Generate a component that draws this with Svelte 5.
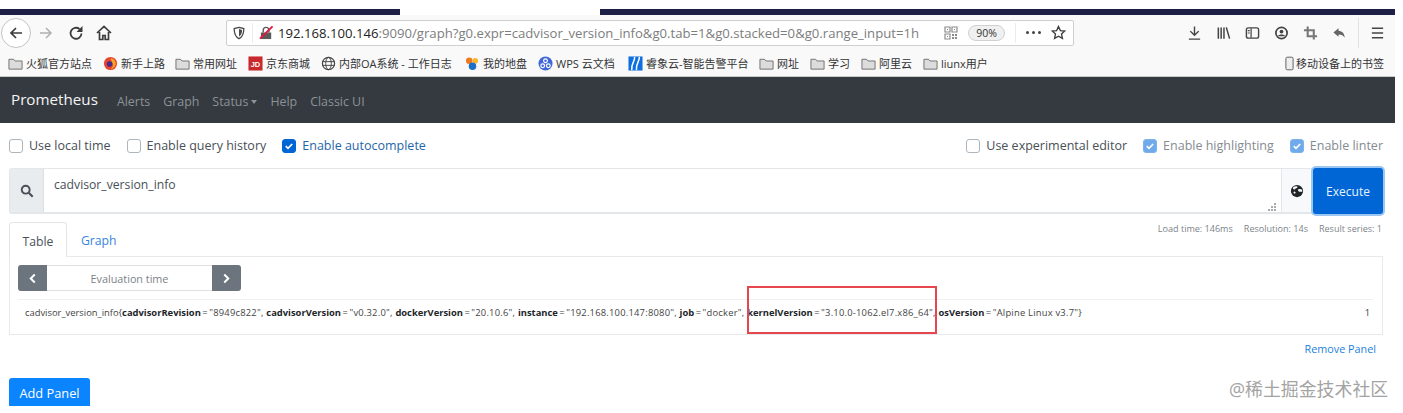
<script>
  const bookmarks = [
    { icon: "folder", label: "火狐官方站点", width: 95 },
    { icon: "firefox", label: "新手上路", width: 72 },
    { icon: "folder", label: "常用网址", width: 73 },
    { icon: "jd", label: "京东商城", width: 73 },
    { icon: "globe", label: "内部OA系统 - 工作日志", width: 144 },
    { icon: "disk", label: "我的地盘", width: 73 },
    { icon: "wps", label: "WPS 云文档", width: 90 },
    { icon: "ruixiang", label: "睿象云-智能告警平台", width: 131 },
    { icon: "folder", label: "网址", width: 51 },
    { icon: "folder", label: "学习", width: 51 },
    { icon: "folder", label: "阿里云", width: 62 },
    { icon: "folder", label: "liunx用户", width: 70 },
  ]

  const navLinks = ["Alerts", "Graph", "Status", "Help", "Classic UI"]

  const labels = [
    ["cadvisorRevision", "8949c822"],
    ["cadvisorVersion", "v0.32.0"],
    ["dockerVersion", "20.10.6"],
    ["instance", "192.168.100.147:8080"],
    ["job", "docker"],
    ["kernelVersion", "3.10.0-1062.el7.x86_64"],
    ["osVersion", "Alpine Linux v3.7"],
  ]
</script>

{#snippet check(on, faded)}
  <span class="check" class:on class:faded>
    {#if on}
      <svg viewBox="0 0 14 14" width="14" height="14"><path d="M3.800 7.200l2.200 2.200 4.200-4.400" fill="none" stroke="#fff" stroke-width="1.700" /></svg>
    {/if}
  </span>
{/snippet}

{#snippet bookmarkIcon(kind)}
  <svg class="bm-icon" viewBox="0 0 16 16" width="15" height="15">
    {#if kind === "folder"}
      <path d="M1 3.500h5l1.500 1.800H15V14H1z" fill="#dcdcdc" stroke="#6f6f6f" />
    {:else if kind === "firefox"}
      <circle cx="8" cy="8" r="7" fill="#e8462c" />
      <path d="M8 2.500a5.500 5.500 0 0 1 5.500 5.500A5.500 5.500 0 0 1 8 13.500c2-1 3-3 2.500-5S8.500 5 8 2.500z" fill="#f9a825" />
      <circle cx="7" cy="8.500" r="3" fill="#4a2a8c" />
    {:else if kind === "jd"}
      <rect x="0.500" y="0.500" width="15" height="15" fill="#c9282d" />
      <text x="8" y="12" class="jd">JD</text>
    {:else if kind === "globe"}
      <circle cx="8" cy="8" r="6.500" fill="none" stroke="#444" stroke-width="1.300" />
      <ellipse cx="8" cy="8" rx="3" ry="6.500" fill="none" stroke="#444" />
      <path d="M1.500 6h13M1.500 10h13" stroke="#444" />
    {:else if kind === "disk"}
      <circle cx="4.500" cy="5" r="3.500" fill="#ee7a22" />
      <circle cx="11" cy="5" r="3" fill="#f7b52c" />
      <circle cx="8" cy="11" r="4" fill="#1f6fc4" />
    {:else if kind === "wps"}
      <circle cx="8" cy="8" r="7.500" fill="#3f68d6" />
      <circle cx="8" cy="5" r="2" fill="none" stroke="#fff" stroke-width="1.300" />
      <circle cx="5" cy="10.500" r="2" fill="none" stroke="#fff" stroke-width="1.300" />
      <circle cx="11" cy="10.500" r="2" fill="none" stroke="#fff" stroke-width="1.300" />
    {:else}
      <rect x="0.500" y="0.500" width="15" height="15" fill="#0f6fe0" />
      <path d="M7 1C8 5 3 8 4 15M12 1c1 4-4 7-3 14" fill="none" stroke="#fff" stroke-width="1.600" />
    {/if}
  </svg>
{/snippet}

<div class="page">
  <div class="tabstrip">
    <div class="tab-dark first"></div>
    <div class="tab-dark second"></div>
  </div>

  <div class="toolbar">
    <div class="nav-buttons">
      <span class="back">
        <svg viewBox="0 0 16 16" width="16" height="16"><path d="M14 8H3M8 3L3 8l5 5" fill="none" stroke="#3c3c3c" stroke-width="1.700" /></svg>
      </span>
      <svg class="forward" viewBox="0 0 16 16" width="16" height="16"><path d="M2 8h11M8 3l5 5-5 5" fill="none" stroke="#b0b0b0" stroke-width="1.500" /></svg>
      <svg class="reload" viewBox="0 0 16 16" width="16" height="16"><path d="M13.500 8.500A5.500 5.500 0 1 1 11.500 4" fill="none" stroke="#3c3c3c" stroke-width="1.800" /><path d="M14.500 1v6h-6z" fill="#3c3c3c" /></svg>
      <svg class="home" viewBox="0 0 16 16" width="16" height="16"><path d="M1 8l7-6.500L15 8M3.500 7v7.500h3.300v-4h2.400v4h3.300V7" fill="none" stroke="#3c3c3c" stroke-width="1.700" /></svg>
    </div>

    <div class="urlbar">
      <svg class="shield" viewBox="0 0 16 16" width="14" height="14"><path d="M8 1.500l5.500 1.500c0 5-1 9-5.500 11.500C3.500 12 2.500 8 2.500 3z" fill="none" stroke="#4a4a4a" stroke-width="1.500" /><path d="M8 3.500l3.500 1c0 3-.7 6-3.500 7.500z" fill="#4a4a4a" /></svg>
      <span class="url-divider"></span>
      <svg class="lock" viewBox="0 0 16 16" width="15" height="15"><path d="M2 8h11v7H2z" fill="#5a5a5a" /><path d="M4.500 8V5.500a3 3 0 0 1 6 0V8" fill="none" stroke="#5a5a5a" stroke-width="1.500" /><path d="M1 14.500L14.500 1.500" stroke="#e5173f" stroke-width="2" /></svg>
      <span class="url"><span class="host">192.168.100.146</span>:9090/graph?g0.expr=cadvisor_version_info&amp;g0.tab=1&amp;g0.stacked=0&amp;g0.range_input=1h</span>
      <svg class="qr" viewBox="0 0 14 14" width="14" height="14"><path d="M1 1h5v5H1zM8 1h5v5H8zM1 8h5v5H1z" fill="none" stroke="#8c8c8c" stroke-width="1.200" /><path d="M3 3h1v1H3zM10 3h1v1h-1zM3 10h1v1H3zM8 8h2v2H8zM11 8h2v2h-2zM8 11h2v2H8zM11 11h2v2h-2z" fill="#8c8c8c" /></svg>
      <span class="zoom-pill">90%</span>
      <span class="url-divider second"></span>
      <span class="dots"><i></i><i></i><i></i></span>
      <svg class="star" viewBox="0 0 16 16" width="15" height="15"><path d="M8 1.500l2 4.400 4.700.5-3.500 3.200 1 4.700L8 11.900l-4.200 2.400 1-4.700L1.300 6.400 6 5.900z" fill="none" stroke="#3c3c3c" stroke-width="1.400" /></svg>
    </div>

    <div class="tools">
      <svg viewBox="0 0 16 16" width="15" height="16"><path d="M8 1v9M3.500 6L8 10.500 12.500 6M2 14.500h12" fill="none" stroke="#444" stroke-width="1.500" /></svg>
      <svg viewBox="0 0 16 16" width="15" height="16"><path d="M2.500 2v12M5.500 2v12M8.500 2v12M11 2l3.500 12" fill="none" stroke="#444" stroke-width="1.600" /></svg>
      <svg viewBox="0 0 16 16" width="15" height="16"><rect x="1.500" y="2.500" width="13" height="11" rx="2" fill="none" stroke="#444" stroke-width="1.500" /><path d="M6.500 3v10M3 5.500h2M3 8h2" stroke="#444" stroke-width="1.300" /></svg>
      <svg viewBox="0 0 16 16" width="15" height="16"><circle cx="8" cy="8" r="6" fill="none" stroke="#444" stroke-width="1.800" /><circle cx="8" cy="6.500" r="2" fill="#444" /><path d="M4 11.500c1-2.500 7-2.500 8 0" fill="#444" /></svg>
      <svg viewBox="0 0 16 16" width="15" height="16"><path d="M5 1v10.500h10M1 5h10.500v10" fill="none" stroke="#777" stroke-width="2.200" /></svg>
      <svg viewBox="0 0 16 16" width="15" height="16"><path d="M7 3L1.500 7.500 7 12V9.500c3 0 5 1 6.500 3.500 0-4-2.500-7-6.500-7.300z" fill="#666" /></svg>
      <span class="tools-sep"></span>
      <svg viewBox="0 0 16 16" width="15" height="16"><path d="M2 3h12M2 8h12M2 13h12" stroke="#444" stroke-width="1.700" /></svg>
    </div>
  </div>

  <div class="bookmarks">
    {#each bookmarks as bm}
      <span class="bookmark" style="width: {bm.width}px">
        {@render bookmarkIcon(bm.icon)}
        {bm.label}
      </span>
    {/each}
    <span class="bookmark mobile">
      <svg viewBox="0 0 10 16" width="9" height="15"><rect x="1" y="1" width="8" height="14" rx="1.500" fill="#eee" stroke="#555" /></svg>
      移动设备上的书签
    </span>
  </div>

  <nav class="navbar">
    <span class="brand">Prometheus</span>
    {#each navLinks as link}
      <span class="nav-link">
        {link}{#if link === "Status"}<span class="caret"></span>{/if}
      </span>
    {/each}
  </nav>

  <main class="content">
    <div class="options">
      <label class="option">{@render check(false)}Use local time</label>
      <label class="option">{@render check(false)}Enable query history</label>
      <label class="option active">{@render check(true)}Enable autocomplete</label>
      <span class="spacer"></span>
      <label class="option">{@render check(false)}Use experimental editor</label>
      <label class="option muted">{@render check(true, true)}Enable highlighting</label>
      <label class="option muted">{@render check(true, true)}Enable linter</label>
    </div>

    <div class="query">
      <span class="search-addon">
        <svg viewBox="0 0 16 16" width="14" height="14"><circle cx="6.500" cy="6.500" r="4.500" fill="none" stroke="#495057" stroke-width="2.200" /><path d="M10 10l4.500 4.500" stroke="#495057" stroke-width="2.500" /></svg>
      </span>
      <div class="expr">
        cadvisor_version_info
        <svg class="grip" viewBox="0 0 8 8" width="8" height="8"><path d="M6 0h2v2H6zM3 3h2v2H3zM6 3h2v2H6zM0 6h2v2H0zM3 6h2v2H3zM6 6h2v2H6z" fill="#aaa" /></svg>
      </div>
      <span class="explorer">
        <svg viewBox="0 0 16 16" width="14" height="14"><circle cx="8" cy="8" r="7" fill="#212529" /><path d="M3.500 3.800C5 2.600 6.500 2.400 8 2.500c1 .7.600 1.700-.3 2.200-.8.500-1.700.7-2 1.500-.6.100-1.500-.2-2.200-.4zM9.500 6c1.500-.6 3.200-.5 4.400.5.200 1 .1 1.700-.1 2.500-1.300-.5-2-.1-3-.2S8.500 7.200 9.500 6zM5 8.500c.9.300 1.600.8 1.500 1.600-.2.900-1 1.300-2.300.5C3.800 9.800 4 8.800 5 8.500z" fill="#f2f4f6" /></svg>
      </span>
      <button class="execute">Execute</button>
    </div>

    <div class="tabs-row">
      <span class="tab current">Table</span>
      <span class="tab link">Graph</span>
      <span class="stats">
        <span>Load time: 146ms</span>
        <span>Resolution: 14s</span>
        <span>Result series: 1</span>
      </span>
    </div>

    <section class="panel">
      <div class="eval">
        <span class="eval-btn">
          <svg viewBox="0 0 10 12" width="9" height="11"><path d="M7.500 1.500L3 6l4.500 4.500" fill="none" stroke="#fff" stroke-width="2.200" /></svg>
        </span>
        <span class="eval-input">Evaluation time</span>
        <span class="eval-btn">
          <svg viewBox="0 0 10 12" width="9" height="11"><path d="M2.500 1.500L7 6l-4.500 4.500" fill="none" stroke="#fff" stroke-width="2.200" /></svg>
        </span>
      </div>
      <div class="result">
        <span>cadvisor_version_info{"{"}{#each labels as [name, value], i}<b>{name}</b><span class="eq">=</span><span class="value">"{value}"</span>{#if i < labels.length - 1}<span class="comma">, </span>{/if}{/each}{"}"}</span>
        <span>1</span>
      </div>
    </section>

    <div class="remove-row"><span class="remove">Remove Panel</span></div>

    <div class="add-clip"><button class="add">Add Panel</button></div>
  </main>

  <div class="highlight"></div>
  <div class="watermark">@稀土掘金技术社区</div>
</div>

<style>
  :global(body) {
    background: #fff;
    overflow: hidden;
  }

  .page {
    position: relative;
    width: 1403px;
    height: 413px;
    overflow: hidden;
    background: #fff;
    font-family: "Open Sans", "Noto Sans CJK SC", sans-serif;
    color: #495057;
  }

  .tabstrip {
    display: flex;
    justify-content: space-between;
    width: 1395px;
    height: 15px;
    padding-top: 9px;
    box-sizing: border-box;
  }

  .tab-dark {
    height: 6px;
    background: #1d1f45;
  }

  .tab-dark.first {
    width: 400px;
  }

  .tab-dark.second {
    width: 795px;
  }

  .toolbar {
    display: flex;
    align-items: center;
    width: 1395px;
    height: 35px;
    background: #f9f9fa;
  }

  .nav-buttons {
    display: flex;
    align-items: center;
    width: 226px;
    flex: none;
  }

  .back {
    display: flex;
    align-items: center;
    justify-content: center;
    width: 30px;
    height: 30px;
    margin-left: 1px;
    border: 1px solid #c4c4c4;
    border-radius: 50%;
    background: #fff;
    box-sizing: border-box;
  }

  .forward {
    margin-left: 7px;
  }

  .reload {
    margin-left: 14px;
  }

  .home {
    margin-left: 12px;
  }

  .urlbar {
    display: flex;
    align-items: center;
    width: 848px;
    height: 26px;
    border: 1px solid #cfcfcf;
    border-radius: 2px;
    background: #fff;
    box-sizing: border-box;
  }

  .shield {
    margin-left: 5px;
  }

  .url-divider {
    width: 1px;
    height: 20px;
    margin-left: 6px;
    background: #ececec;
  }

  .url-divider.second {
    margin-left: 10px;
  }

  .lock {
    margin-left: 6px;
  }

  .url {
    margin-left: 4px;
    width: 667px;
    flex: none;
    font-size: 13.150px;
    color: #7d7d7d;
    white-space: nowrap;
  }

  .host {
    color: #222;
  }

  .qr {
    flex: none;
    margin-left: -1px;
  }

  .zoom-pill {
    width: 37px;
    height: 16px;
    margin-left: 10px;
    flex: none;
    border: 1px solid #d0d0d0;
    border-radius: 9px;
    background: #f0f0f0;
    box-sizing: border-box;
    font-size: 10.500px;
    line-height: 14px;
    text-align: center;
    color: #333;
  }

  .dots {
    display: flex;
    gap: 3px;
    margin-left: 10px;
  }

  .dots i {
    width: 3px;
    height: 3px;
    border-radius: 50%;
    background: #444;
  }

  .star {
    margin-left: 10px;
  }

  .tools {
    display: flex;
    align-items: center;
    gap: 14px;
    margin-left: 113px;
  }

  .tools-sep {
    width: 1px;
    height: 30px;
    background: #e2e2e2;
    margin: 0 -3px;
  }

  .bookmarks {
    display: flex;
    align-items: center;
    width: 1395px;
    height: 27px;
    padding-left: 8px;
    box-sizing: border-box;
    background: #f9f9fa;
    font-size: 11px;
    color: #333;
    white-space: nowrap;
    border-bottom: 1px solid #c9c9c9;
  }

  .bookmark {
    display: flex;
    align-items: center;
    gap: 3px;
    flex: none;
  }

  .bm-icon {
    flex: none;
  }

  .jd {
    font: bold 8px "Liberation Sans", sans-serif;
    fill: #fff;
    text-anchor: middle;
  }

  .bookmark.mobile {
    margin-left: auto;
    margin-right: 11px;
    gap: 2px;
  }

  .navbar {
    display: flex;
    align-items: center;
    width: 1395px;
    height: 46px;
    padding-left: 11px;
    box-sizing: border-box;
    background: #343a40;
    font-size: 12.400px;
  }

  .brand {
    margin: -2px 11px 0 0;
    font-size: 15.200px;
    color: #f4f4f4;
  }

  .nav-link {
    padding: 2px 0 0 8px;
    margin-right: 5px;
    color: #8d9297;
  }

  .caret {
    display: inline-block;
    margin-left: 3px;
    vertical-align: 2px;
    border-top: 4px solid #8d9297;
    border-left: 3.500px solid transparent;
    border-right: 3.500px solid transparent;
  }

  .content {
    width: 1374px;
    padding-left: 9px;
  }

  .options {
    display: flex;
    align-items: center;
    height: 45px;
    font-size: 12.500px;
  }

  .option {
    display: flex;
    align-items: center;
    gap: 6px;
    margin-right: 16px;
  }

  .option:last-child {
    margin-right: 0;
  }

  .option.active {
    color: #1f66a8;
  }

  .option.muted {
    color: #858b91;
  }

  .spacer {
    flex: 1;
  }

  .check {
    width: 14px;
    height: 14px;
    flex: none;
    border: 1px solid #adb5bd;
    border-radius: 3px;
    background: #fff;
    box-sizing: border-box;
    display: flex;
    align-items: center;
    justify-content: center;
  }

  .check svg {
    flex: none;
  }

  .check.on {
    border-color: #0066d6;
    background: #0066d6;
  }

  .check.faded {
    border-color: #7db3ec;
    background: #6fabeb;
  }

  .query {
    display: flex;
    height: 46px;
    border: 1px solid #e4e7ea;
    border-right: 0;
    border-bottom-width: 2px;
    border-radius: 3px;
    box-sizing: border-box;
  }

  .search-addon {
    display: flex;
    align-items: center;
    justify-content: center;
    width: 33px;
    flex: none;
    background: #e9ecef;
    border-right: 1px solid #dadfe3;
  }

  .expr {
    position: relative;
    flex: 1;
    padding: 8px 0 0 10px;
    font-size: 12.200px;
    line-height: 16px;
    color: #495057;
  }

  .grip {
    position: absolute;
    right: 5px;
    bottom: 1px;
  }

  .explorer {
    display: flex;
    align-items: center;
    justify-content: center;
    width: 31px;
    flex: none;
    background: #f8f9fa;
    border-left: 1px solid #e4e7ea;
    box-sizing: border-box;
  }

  .execute {
    width: 70px;
    flex: none;
    margin: -1px 0 -2px 1px;
    border: 0;
    border-radius: 3px;
    background: #0066d6;
    box-shadow: 0 0 0 2px #9cc6f2;
    font: 12px "Open Sans", sans-serif;
    color: #e6f2ff;
  }

  .tabs-row {
    display: flex;
    height: 35px;
    margin-top: 8px;
    border-bottom: 1px solid #e7e9ec;
    box-sizing: border-box;
    font-size: 12.200px;
  }

  .tab {
    display: flex;
    align-items: center;
    padding: 2px 14px 0;
    box-sizing: border-box;
  }

  .tab.current {
    width: 58px;
    height: 35px;
    justify-content: center;
    padding: 2px 0 0;
    border: 1px solid #e3e6e9;
    border-bottom: 0;
    border-radius: 3px 3px 0 0;
    background: #fff;
  }

  .tab.link {
    height: 35px;
    color: #3585de;
  }

  .stats {
    display: flex;
    gap: 11px;
    margin-left: auto;
    height: 14px;
    font-size: 9.050px;
    line-height: 14px;
    color: #7d8489;
    padding-right: 1px;
  }

  .panel {
    height: 78px;
    padding: 8px 9px 0 8px;
    border: 1px solid #e7e9ec;
    border-top: 0;
    box-sizing: border-box;
  }

  .eval {
    display: flex;
    width: 223px;
    height: 26px;
  }

  .eval-btn {
    display: flex;
    align-items: center;
    justify-content: center;
    width: 29px;
    background: #6c757d;
  }

  .eval-btn:first-child {
    border-radius: 3px 0 0 3px;
  }

  .eval-btn:last-child {
    border-radius: 0 3px 3px 0;
  }

  .eval-input {
    flex: 1;
    border: 1px solid #dde0e3;
    border-width: 1px 0;
    box-sizing: border-box;
    font-size: 10.800px;
    line-height: 25px;
    text-align: center;
    color: #7b8288;
  }

  .result {
    display: flex;
    justify-content: space-between;
    align-items: flex-start;
    height: 35px;
    margin-top: 8px;
    padding: 6px 3px 0 7px;
    border-top: 1px solid #eef0f2;
    box-sizing: border-box;
    font-size: 9.400px;
    line-height: 13px;
    color: #444;
    white-space: nowrap;
  }

  .result b {
    color: #212529;
  }

  .eq {
    margin: 0 1.500px;
  }

  .value {
    letter-spacing: 0.220px;
  }

  .comma {
    margin-right: 3px;
  }

  .remove-row {
    display: flex;
    justify-content: flex-end;
    height: 43px;
    padding: 7px 7px 0 0;
    box-sizing: border-box;
  }

  .remove {
    font-size: 10.800px;
    line-height: 14px;
    color: #1a7fe0;
  }

  .add-clip {
    height: 28px;
    overflow: hidden;
  }

  .add {
    width: 81px;
    height: 34px;
    border: 0;
    border-radius: 3px;
    background: #0a84ff;
    font: 12.800px "Open Sans", sans-serif;
    color: #fff;
    padding: 0 0 4px;
  }

  .highlight {
    position: absolute;
    left: 747px;
    top: 286px;
    width: 190px;
    height: 48px;
    border: 2px solid #e8464f;
    box-sizing: border-box;
  }

  .watermark {
    position: absolute;
    left: 1229px;
    top: 378px;
    font-size: 17.900px;
    line-height: 22px;
    white-space: nowrap;
    color: #a3a3a3;
  }
</style>
